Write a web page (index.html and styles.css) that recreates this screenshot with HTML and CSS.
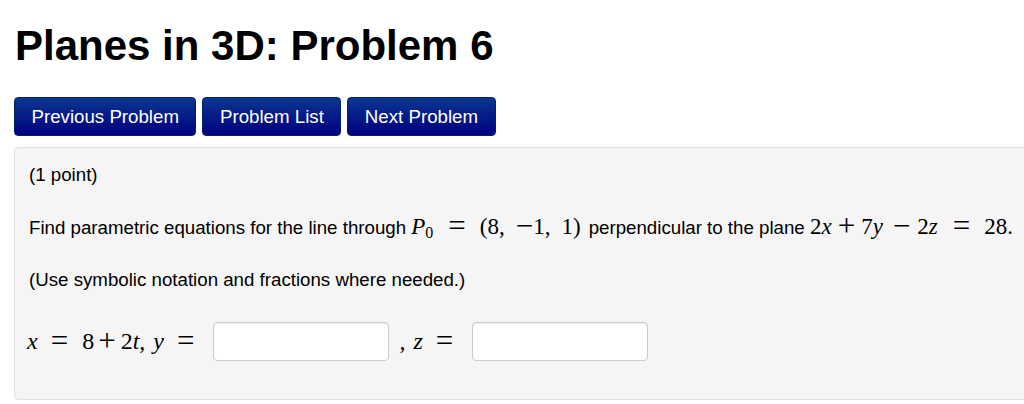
FILE: index.html
```html
<!DOCTYPE html>
<html lang="en">
<head>
    <meta charset="UTF-8">
    <title>Planes in 3D: Problem 6</title>
    <link rel="stylesheet" href="styles.css">
</head>
<body>
    <div class="page">
        <h1>Planes in 3D: Problem 6</h1>
        <div class="nav-buttons">
            <a class="nav-btn" href="#">Previous Problem</a>
            <a class="nav-btn" href="#">Problem List</a>
            <a class="nav-btn" href="#">Next Problem</a>
        </div>
        <div class="problem">
            <p>(1 point)</p>
            <p>Find parametric equations for the line through
                <span class="math"><i>P</i><sub>0</sub><span class="op rel">=</span>(8,<span class="sp"></span><span class="op">&minus;</span>1,<span class="sp"></span>1)</span><span class="gap"></span>perpendicular to the plane
                <span class="math">2<i>x</i><span class="op bin">+</span>7<i>y</i><span class="op bin wide">&minus;</span>2<i>z</i><span class="op rel">=</span>28.</span>
            </p>
            <p>(Use symbolic notation and fractions where needed.)</p>
            <div class="answer-row">
                <span class="math big"><i>x</i><span class="op rel">=</span>8<span class="op bin">+</span>2<i>t</i>,<span class="thin"></span><i>y</i><span class="op rel last">=</span></span>
                <input type="text" class="answer">
                <span class="math big">,<span class="thin"></span><i>z</i><span class="op rel last">=</span></span>
                <input type="text" class="answer">
            </div>
        </div>
    </div>
</body>
</html>
```

FILE: styles.css
```css
* {
    box-sizing: border-box;
}

body {
    margin: 0;
    background-color: #fff;
    font-family: 'Liberation Sans', Arial, sans-serif;
    color: #000;
    overflow: hidden;
}

.page {
    padding: 0 0 0 14px;
}

h1 {
    margin: 22px 0 0 1px;
    font-size: 42px;
    line-height: 48px;
    font-weight: bold;
}

.nav-buttons {
    display: flex;
    gap: 6px;
    margin-top: 27px;
}

.nav-btn {
    display: block;
    padding: 8px 16.5px;
    font-size: 18.7px;
    line-height: 21px;
    color: #fff;
    text-decoration: none;
    background: linear-gradient(#0a3690, #00007e);
    border: 1px solid #00206a;
    border-radius: 4px;
}

.problem {
    margin: 11px -40px 0 0;
    padding: 14px 14px 38px;
    background-color: #f5f5f5;
    border: 1px solid #e3e3e3;
    border-radius: 4px;
}

.problem p {
    margin: 0 0 26px;
    font-size: 18.7px;
    line-height: 26px;
}

.math {
    font-family: 'Liberation Serif', 'Times New Roman', serif;
    font-size: 23px;
    white-space: nowrap;
}

.math.big {
    font-size: 24px;
}

.math i {
    font-style: italic;
}

.math sub {
    font-size: 16px;
    vertical-align: -4px;
    line-height: 0;
}

/* operators drawn larger so they are as wide as the TeX ones */
.op {
    font-size: 31px;
    line-height: 0;
    vertical-align: -2px;
}

.rel {
    margin: 0 14px 0 15px;
}

.big .rel {
    margin: 0 14px 0 13px;
}

.rel.last,
.big .rel.last {
    margin-right: 0;
}

.bin {
    margin: 0 6px 0 6px;
}

.bin.wide {
    margin: 0 7px 0 10px;
}

.big .bin {
    margin: 0 5px 0 4px;
}

.sp {
    display: inline-block;
    width: 11px;
}

.thin {
    display: inline-block;
    width: 8px;
}

.gap {
    display: inline-block;
    width: 8px;
}

.answer-row {
    display: flex;
    align-items: center;
    height: 40px;
    margin-top: 28px;
    margin-left: -2px;
}

.answer {
    width: 176px;
    height: 39px;
    margin: 0 10px 0 19px;
    background-color: #fff;
    border: 1px solid #ccc;
    border-radius: 4px;
    box-shadow: inset 0 1px 1px rgba(0, 0, 0, 0.075);
}
```
